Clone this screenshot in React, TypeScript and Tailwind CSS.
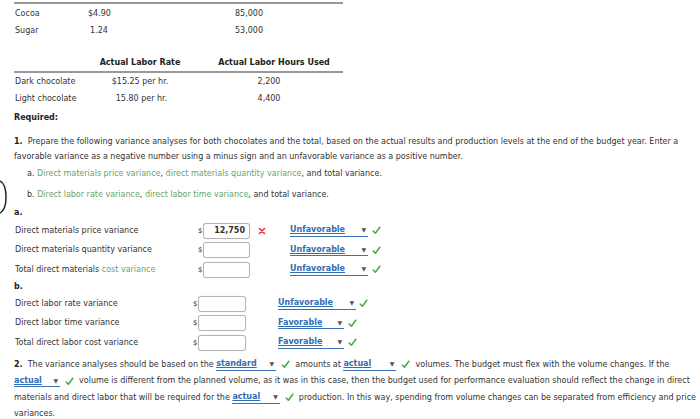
import React from "react";

const Check = () => (
  <svg width="9" height="9" viewBox="0 0 9 9" className="inline-block">
    <path d="M1.2 5 L3.4 7.3 L7.8 1.2" fill="none" stroke="#48a848" strokeWidth="1.5" strokeLinecap="round" strokeLinejoin="round" />
  </svg>
);

const Cross = () => (
  <svg width="8" height="8" viewBox="0 0 8 8" className="inline-block">
    <path d="M1.5 1.5 L6.5 6.5 M6.5 1.5 L1.5 6.5" fill="none" stroke="#e53935" strokeWidth="1.6" strokeLinecap="round" />
  </svg>
);

const Drop = ({ label, w }: { label: string; w: string }) => (
  <span className={`inline-flex items-center justify-between border-b border-[#3b73b9] ${w} h-[12px] leading-none`}>
    <span className="font-bold text-[#2f6db5] underline decoration-[#2f6db5]">{label}</span>
    <span className="text-[6px] text-[#555] mr-[2px]">▼</span>
  </span>
);

const Box = ({ v, w = "w-[46px]" }: { v?: string; w?: string }) => (
  <span className={`inline-flex items-center justify-end ${w} h-[16px] border border-[#b5b5b5] rounded-[3px] shadow-[0_0_1px_#ccc] bg-white pr-[4px] font-bold text-[#333]`}>
    {v}
  </span>
);

const Row = ({
  label,
  dollarW,
  v,
  x,
  drop,
  dropW,
  gapDrop,
  boxW,
  checkGap = "ml-[4px]",
}: {
  label: React.ReactNode;
  dollarW: string;
  v?: string;
  x?: boolean;
  drop: string;
  dropW: string;
  gapDrop: string;
  boxW?: string;
  checkGap?: string;
}) => (
  <div className="flex items-center h-[19.5px]">
    <span className={`${dollarW} pl-[1px]`}>{label}</span>
    <span className="text-[#333] w-[5px] text-[7px]">$</span>
    <Box v={v} w={boxW} />
    <span className={`${gapDrop} flex items-center`}>
      {x && <span className="ml-[8px] flex items-center"><Cross /></span>}
    </span>
    <Drop label={drop} w={dropW} />
    <span className={`${checkGap} flex items-center`}><Check /></span>
  </div>
);

export default function App() {
  const green = "text-[#6aa36a]";
  return (
    <div
      className="relative w-[700px] h-[419px] bg-white text-[#333] text-[8px] overflow-hidden"
      style={{ fontFamily: '"DejaVu Sans", Verdana, sans-serif' }}
    >
      <svg className="absolute left-0 top-[179px]" width="10" height="36" viewBox="0 0 10 36">
        <path d="M0 2 C 8 6, 8 30, 0 34" fill="none" stroke="#222" strokeWidth="1.5" />
      </svg>
      <div className="pl-[14px] pt-[2px]">
        {/* top table */}
        <div className="w-[329px] border-t-2 border-[#999]">
          <div className="flex items-center h-[17px] mt-[1px]">
            <span className="w-[74px] pl-[1px]">Cocoa</span>
            <span className="w-[100px]">$4.90</span>
            <span className="w-[122px] text-center">85,000</span>
          </div>
          <div className="flex items-center h-[17px]">
            <span className="w-[74px] pl-[1px]">Sugar</span>
            <span className="w-[100px] pl-[2px]">1.24</span>
            <span className="w-[122px] text-center">53,000</span>
          </div>
        </div>
        {/* labor table */}
        <div className="w-[329px] mt-[16px]">
          <div className="flex items-center h-[18px] font-bold text-[#222] border-b-2 border-[#999]">
            <span className="w-[80px]"></span>
            <span className="w-[92px] text-center">Actual Labor Rate</span>
            <span className="w-[19px]"></span>
            <span className="w-[138px] text-center">Actual Labor Hours Used</span>
          </div>
          <div className="flex items-center h-[17px]">
            <span className="w-[80px] pl-[1px]">Dark chocolate</span>
            <span className="w-[92px] text-center">$15.25 per hr.</span>
            <span className="w-[19px]"></span>
            <span className="w-[128px] text-center">2,200</span>
          </div>
          <div className="flex items-center h-[17px]">
            <span className="w-[80px] pl-[1px]">Light chocolate</span>
            <span className="w-[92px] text-center pl-[3px]">15.80 per hr.</span>
            <span className="w-[19px]"></span>
            <span className="w-[128px] text-center">4,400</span>
          </div>
        </div>
        <div className="font-bold text-[#222] mt-[4px] h-[14px] leading-[14px]">Required:</div>
        <div className="mt-[8.5px] leading-[15px]">
          <div>
            <span className="font-bold text-[#222]">1.</span>&nbsp; Prepare the following variance analyses for both chocolates and the total, based on the actual results and production levels at the end of the budget year. Enter a
          </div>
          <div>favorable variance as a negative number using a minus sign and an unfavorable variance as a positive number.</div>
        </div>
        <div className="pl-[13px] mt-[0.5px] leading-[20.5px]">
          <div>
            a. <span className={green}>Direct materials price variance</span>, <span className={green}>direct materials quantity variance</span>, and total variance.
          </div>
          <div>
            b. <span className={green}>Direct labor rate variance</span>, <span className={green}>direct labor time variance</span>, and total variance.
          </div>
        </div>
        <div className="font-bold text-[#222] h-[16px] leading-[16px]">a.</div>
        <div>
          <Row label="Direct materials price variance" dollarW="w-[184px]" boxW="w-[47px]" v="12,750" x drop="Unfavorable" dropW="w-[78px]" gapDrop="w-[40px]" />
          <Row label="Direct materials quantity variance" dollarW="w-[184px]" boxW="w-[47px]" drop="Unfavorable" dropW="w-[78px]" gapDrop="w-[40px]" />
          <Row label={<>Total direct materials <span className={green}>cost variance</span></>} dollarW="w-[184px]" boxW="w-[47px]" drop="Unfavorable" dropW="w-[78px]" gapDrop="w-[40px]" />
        </div>
        <div className="font-bold text-[#222] h-[14px] leading-[14px] mt-[0.5px]">b.</div>
        <div>
          <Row label="Direct labor rate variance" dollarW="w-[179px]" boxW="w-[48px]" drop="Unfavorable" dropW="w-[78px]" gapDrop="w-[32px]" checkGap="ml-[3px]" />
          <Row label="Direct labor time variance" dollarW="w-[179px]" boxW="w-[48px]" drop="Favorable" dropW="w-[66px]" gapDrop="w-[32px]" />
          <Row label="Total direct labor cost variance" dollarW="w-[179px]" boxW="w-[48px]" drop="Favorable" dropW="w-[66px]" gapDrop="w-[32px]" />
        </div>
        <div className="mt-[4px] leading-[16.5px] pr-[4px]">
          <div className="flex items-center h-[16.5px] whitespace-pre">
            <span><span className="font-bold text-[#222]">2.</span>  The variance analyses should be based on the </span>
            <Drop label="standard" w="w-[60px]" />
            <span className="ml-[5px] flex items-center"><Check /></span>
            <span>  amounts at </span>
            <Drop label="actual" w="w-[53px]" />
            <span className="ml-[5px] flex items-center"><Check /></span>
            <span>  volumes. The budget must flex with the volume changes. If the</span>
          </div>
          <div className="flex items-center h-[16.5px] whitespace-pre">
            <Drop label="actual" w="w-[46px]" />
            <span className="ml-[5px] flex items-center"><Check /></span>
            <span>  volume is different from the planned volume, as it was in this case, then the budget used for performance evaluation should reflect the change in direct</span>
          </div>
          <div className="flex items-center h-[16.5px] whitespace-pre">
            <span>materials and direct labor that will be required for the </span>
            <Drop label="actual" w="w-[52px]" />
            <span className="ml-[5px] flex items-center"><Check /></span>
            <span>  production. In this way, spending from volume changes can be separated from efficiency and price</span>
          </div>
          <div className="h-[16.5px]">variances.</div>
        </div>
      </div>
    </div>
  );
}
